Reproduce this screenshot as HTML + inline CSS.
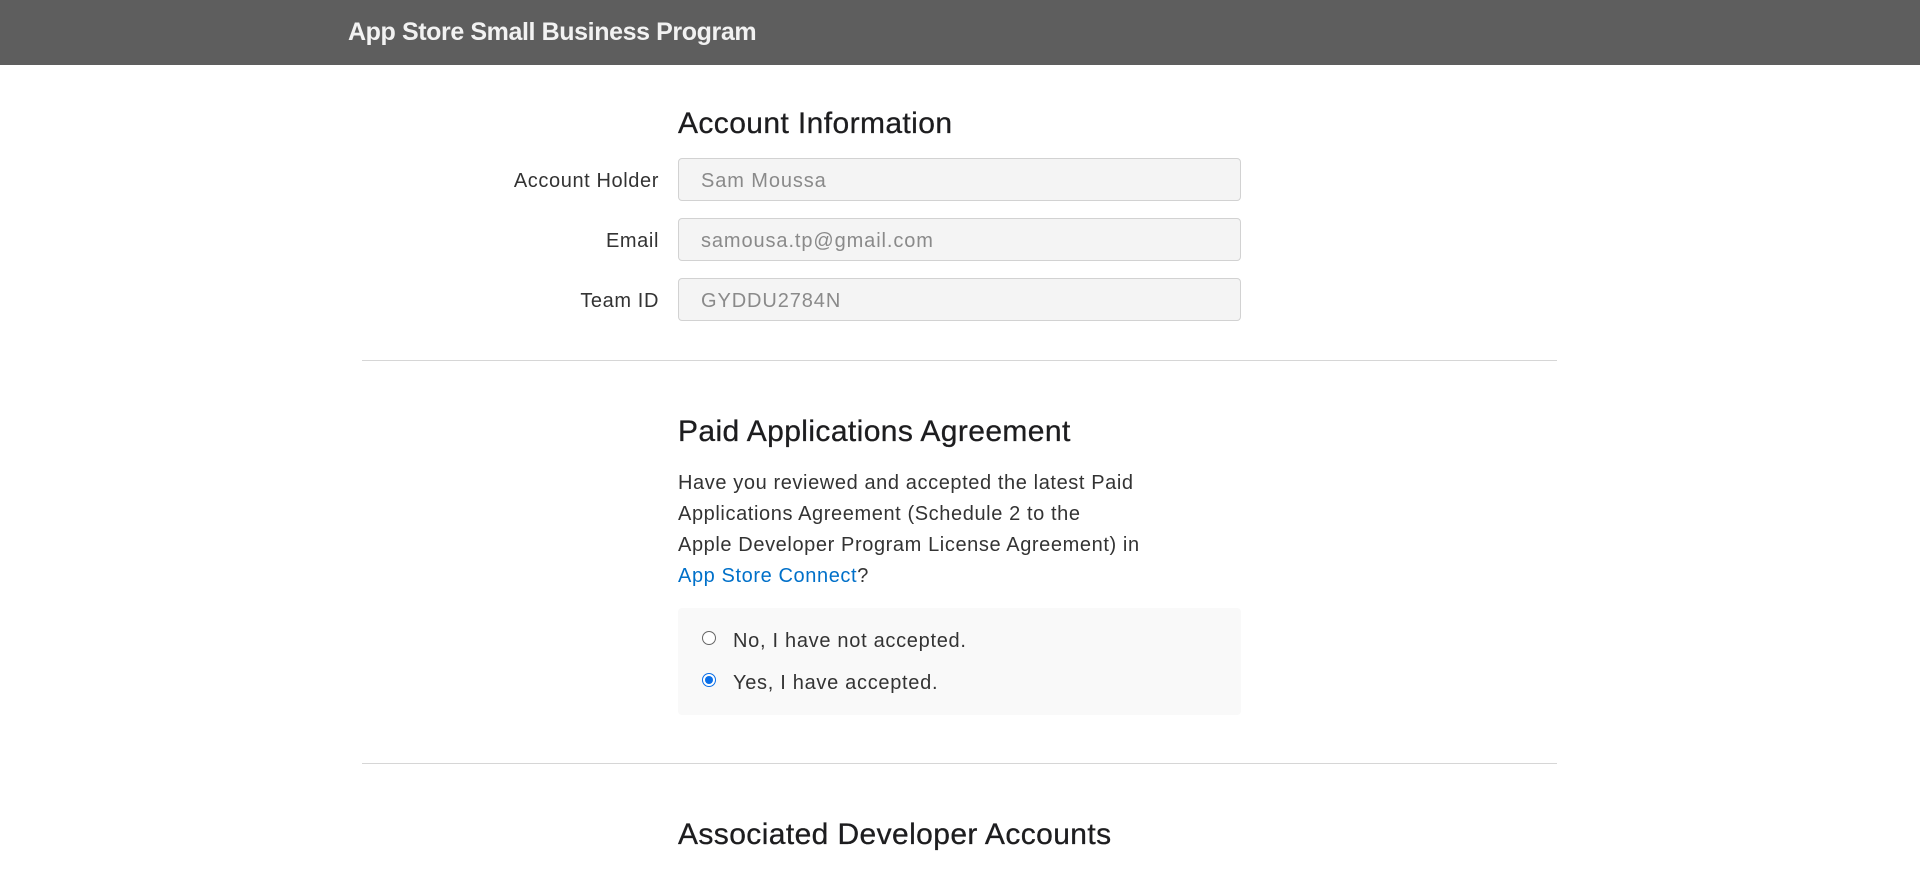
<!DOCTYPE html>
<html><head><meta charset="utf-8"><style>
*{margin:0;padding:0;box-sizing:border-box}
body{width:1920px;height:869px;overflow:hidden;background:#fff;font-family:"Liberation Sans",sans-serif;color:#1d1d1f;position:relative}
.hdr{position:absolute;left:0;top:0;width:1920px;height:65px;background:#5e5e5e}
.hdr span{position:absolute;left:348px;top:18px;font-size:25px;font-weight:bold;color:#f2f2f2;letter-spacing:-0.4px}
.h{position:absolute;left:678px;font-size:30px;color:#1d1d1f;letter-spacing:0.4px;-webkit-text-stroke:0.3px #1d1d1f}
.lbl{position:absolute;right:1261px;font-size:20px;color:#333;letter-spacing:0.6px}
.inp{position:absolute;left:678px;width:563px;height:43px;background:#f4f4f4;border:1px solid #d2d2d2;border-radius:4px;font-size:20px;color:#8a8a8a;padding:11px 0 0 22px;letter-spacing:0.9px}
.hr{position:absolute;left:362px;width:1195px;height:1px;background:#d6d6d6}
.p{position:absolute;left:678px;top:468px;font-size:20px;line-height:31px;color:#333;letter-spacing:0.6px}
.p a{color:#0070c9;text-decoration:none}
.box{position:absolute;left:678px;top:608px;width:563px;height:107px;background:#f9f9f9;border-radius:4px}
.r{position:absolute;left:702px;width:14px;height:14px;border-radius:50%;border:1px solid #666;background:#fff}
.r.on{border:1px solid #0a6fe8;background:#fff}
.r.on::after{content:"";position:absolute;left:2px;top:2px;width:8px;height:8px;border-radius:50%;background:#0a6fe8}
.rt{position:absolute;left:733px;font-size:20px;color:#333;letter-spacing:0.7px}
</style></head><body>
<div class="hdr"><span>App Store Small Business Program</span></div>
<div class="h" style="top:107px">Account Information</div>
<div class="lbl" style="top:170px">Account Holder</div>
<div class="inp" style="top:158px">Sam Moussa</div>
<div class="lbl" style="top:230px">Email</div>
<div class="inp" style="top:218px">samousa.tp@gmail.com</div>
<div class="lbl" style="top:290px">Team ID</div>
<div class="inp" style="top:278px">GYDDU2784N</div>
<div class="hr" style="top:360px"></div>
<div class="h" style="top:415px">Paid Applications Agreement</div>
<div class="p">Have you reviewed and accepted the latest Paid<br>Applications Agreement (Schedule 2 to the<br>Apple Developer Program License Agreement) in<br><a>App Store Connect</a>?</div>
<div class="box"></div>
<div class="r" style="top:631px"></div><div class="rt" style="top:630px">No, I have not accepted.</div>
<div class="r on" style="top:673px"></div><div class="rt" style="top:672px">Yes, I have accepted.</div>
<div class="hr" style="top:763px"></div>
<div class="h" style="top:818px">Associated Developer Accounts</div>
</body></html>
